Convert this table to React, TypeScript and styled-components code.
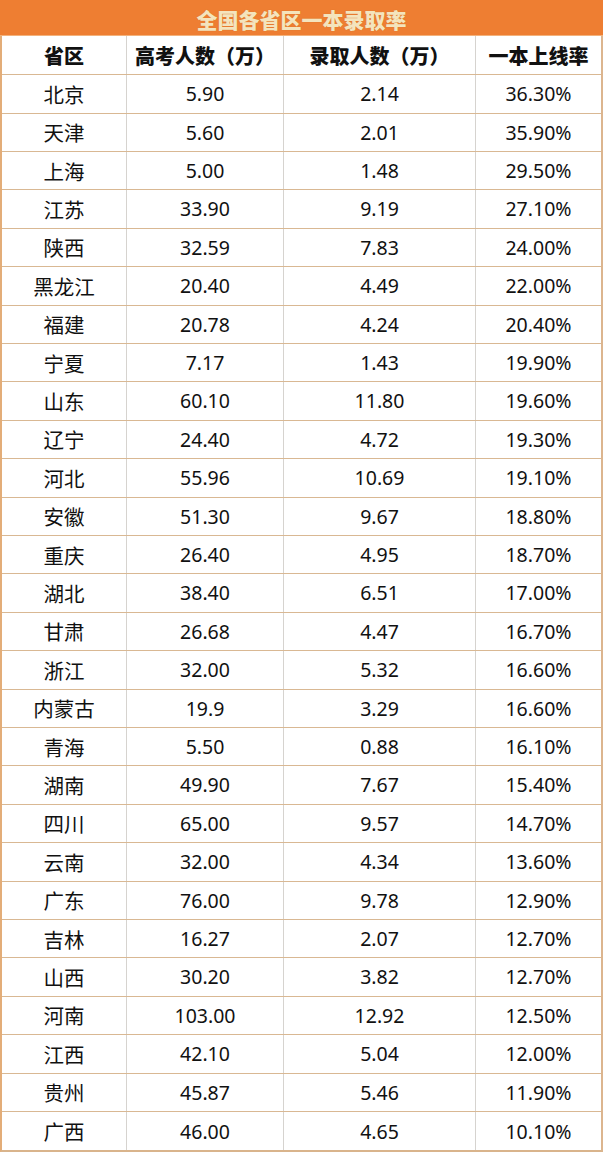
import React from "react";
import styled, { createGlobalStyle } from "styled-components";

const Global = createGlobalStyle`
  html, body { margin: 0; padding: 0; background: #ffffff; }
  body { font-family: "Noto Sans", "Noto Sans CJK SC", sans-serif; }
`;

const Wrap = styled.div`
  width: 603px;
  display: flex;
  flex-direction: column;
`;

const Title = styled.div`
  height: 36px;
  background: #ee7e32;
  border-bottom: 1px solid #f3b27c;
  display: flex;
  align-items: center;
  justify-content: center;
  padding-top: 3px;
  box-sizing: border-box;
  color: #f4e4bd;
  font-family: "Noto Sans CJK SC", sans-serif;
  font-weight: 900;
  font-size: 21px;
  text-shadow: 0 0 1px rgba(160, 80, 20, 0.4);
`;

const Table = styled.div`
  display: flex;
  flex-direction: column;
  border-left: 2px solid #e3ad78;
  border-right: 2px solid #dcb58e;
  border-bottom: 2px solid #d9b48c;
`;

const Row = styled.div<{ $h: number }>`
  display: grid;
  grid-template-columns: 125px 157px 192px 1fr;
  height: ${(p) => p.$h}px;
  border-bottom: 1px solid #d9b893;
  box-sizing: border-box;
  &:last-child { border-bottom: none; }
`;

const Cell = styled.div<{ $head?: boolean; $name?: boolean }>`
  display: flex;
  align-items: center;
  justify-content: center;
  border-right: 1px solid #d6d3cf;
  color: #111;
  font-size: ${(p) => (p.$head ? "20px" : p.$name ? "20.5px" : "19.5px")};
  font-weight: ${(p) => (p.$head ? 900 : 400)};
  font-family: ${(p) =>
    p.$head || p.$name
      ? `"Noto Sans CJK SC", sans-serif`
      : `"Noto Sans", "Noto Sans CJK SC", sans-serif`};
  &:last-child { border-right: none; }
`;

const data: [string, string, string, string][] = [
  ["北京", "5.90", "2.14", "36.30%"],
  ["天津", "5.60", "2.01", "35.90%"],
  ["上海", "5.00", "1.48", "29.50%"],
  ["江苏", "33.90", "9.19", "27.10%"],
  ["陕西", "32.59", "7.83", "24.00%"],
  ["黑龙江", "20.40", "4.49", "22.00%"],
  ["福建", "20.78", "4.24", "20.40%"],
  ["宁夏", "7.17", "1.43", "19.90%"],
  ["山东", "60.10", "11.80", "19.60%"],
  ["辽宁", "24.40", "4.72", "19.30%"],
  ["河北", "55.96", "10.69", "19.10%"],
  ["安徽", "51.30", "9.67", "18.80%"],
  ["重庆", "26.40", "4.95", "18.70%"],
  ["湖北", "38.40", "6.51", "17.00%"],
  ["甘肃", "26.68", "4.47", "16.70%"],
  ["浙江", "32.00", "5.32", "16.60%"],
  ["内蒙古", "19.9", "3.29", "16.60%"],
  ["青海", "5.50", "0.88", "16.10%"],
  ["湖南", "49.90", "7.67", "15.40%"],
  ["四川", "65.00", "9.57", "14.70%"],
  ["云南", "32.00", "4.34", "13.60%"],
  ["广东", "76.00", "9.78", "12.90%"],
  ["吉林", "16.27", "2.07", "12.70%"],
  ["山西", "30.20", "3.82", "12.70%"],
  ["河南", "103.00", "12.92", "12.50%"],
  ["江西", "42.10", "5.04", "12.00%"],
  ["贵州", "45.87", "5.46", "11.90%"],
  ["广西", "46.00", "4.65", "10.10%"],
];

const heads = ["省区", "高考人数（万）", "录取人数（万）", "一本上线率"];

export default function App() {
  return (
    <Wrap>
      <Global />
      <Title>全国各省区一本录取率</Title>
      <Table>
        <Row $h={39}>
          {heads.map((h) => (
            <Cell key={h} $head>
              {h}
            </Cell>
          ))}
        </Row>
        {data.map((r, i) => (
          <Row key={r[0]} $h={i % 5 === 2 ? 38 : 38.5}>
            {r.map((c, j) => (
              <Cell key={j} $name={j === 0}>
                {c}
              </Cell>
            ))}
          </Row>
        ))}
      </Table>
    </Wrap>
  );
}
